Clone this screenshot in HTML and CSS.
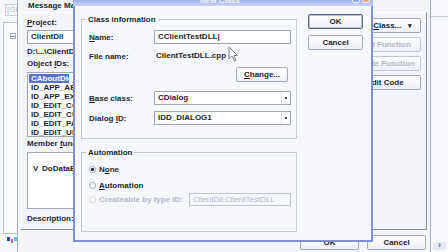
FILE: index.html
```html
<!DOCTYPE html>
<html lang="en">

<head>
  <meta charset="UTF-8">
  <title>New Class</title>
  <link rel="stylesheet" href="styles.css">
</head>

<body>
  <div class="desktop">

    <!-- IDE workspace pane on the left -->
    <div class="ide-left">
      <div class="ide-combo">[Gl</div>
      <div class="ide-tree"><span class="tree-box"></span></div>
      <div class="ide-icon"><i class="sq blue"></i><i class="sq pink"></i><i class="sq cyan"></i></div>
    </div>

    <!-- ClassWizard, behind the dialog -->
    <div class="wizard">
      <div class="tabs"><span class="tab">Message Maps</span></div>
      <div class="page">
        <div class="page-left">
          <div class="lbl first"><u>P</u>roject:</div>
          <div class="box combo-sm">ClientDll</div>
          <div class="lbl path">D:\...\ClientDll.dsw</div>
          <div class="lbl">Object <u>I</u>Ds:</div>
          <div class="box list ids">
            <div class="item sel">CAboutDlg</div>
            <div class="item">ID_APP_ABOUT</div>
            <div class="item">ID_APP_EXIT</div>
            <div class="item">ID_EDIT_COPY</div>
            <div class="item">ID_EDIT_CUT</div>
            <div class="item">ID_EDIT_PASTE</div>
            <div class="item">ID_EDIT_UNDO</div>
          </div>
          <div class="lbl">Member <u>f</u>unctions:</div>
          <div class="box list members">
            <div class="item"><span class="kind">V</span>DoDataExchange</div>
          </div>
          <div class="lbl desc">Description:</div>
        </div>
        <div class="page-right">
          <div class="btn">Add <u>C</u>lass... <span class="caret">▾</span></div>
          <div class="btn off">Add Function</div>
          <div class="btn off">Delete Function</div>
          <div class="btn"><u>E</u>dit Code</div>
        </div>
      </div>
      <div class="wizard-buttons">
        <div class="btn wide">OK</div>
        <div class="btn wide">Cancel</div>
      </div>
    </div>

    <!-- IDE pane on the right -->
    <div class="ide-right">
      <div class="ide-right-head"></div>
      <div class="ide-right-body"></div>
      <div class="more">&rsaquo;</div>
    </div>

    <!-- New Class dialog -->
    <div class="dlg">
      <div class="titlebar">
        <span class="title">New Class</span>
        <span class="tb-btn help"></span>
        <span class="tb-btn close"></span>
      </div>
      <div class="dlg-body">
        <div class="dlg-main">
          <div class="group info">
            <div class="group-title">Class information</div>
            <div class="row name">
              <span class="row-lbl"><u>N</u>ame:</span>
              <div class="box field">CClientTestDLL|</div>
            </div>
            <div class="row file">
              <span class="row-lbl">File name:</span>
              <div class="static">ClientTestDLL.cpp</div>
            </div>
            <div class="row change">
              <div class="btn chg"><u>C</u>hange...</div>
            </div>
            <div class="row base">
              <span class="row-lbl"><u>B</u>ase class:</span>
              <div class="box field combo">CDialog<span class="drop"></span></div>
            </div>
            <div class="row dlgid">
              <span class="row-lbl">Dialog <u>I</u>D:</span>
              <div class="box field combo">IDD_DIALOG1<span class="drop"></span></div>
            </div>
          </div>

          <div class="group auto">
            <div class="group-title">Automation</div>
            <div class="radio r1"><span class="dot on"></span><span>N<u>o</u>ne</span></div>
            <div class="radio r2"><span class="dot"></span><span><u>A</u>utomation</span></div>
            <div class="radio r3 off"><span class="dot"></span><span>Createable by type ID:</span>
              <div class="box field ro">ClientDll.ClientTestDLL</div>
            </div>
          </div>
        </div>
        <div class="dlg-side">
          <div class="btn dlg-btn default">OK</div>
          <div class="btn dlg-btn">Cancel</div>
        </div>
      </div>
    </div>

    <svg class="cursor" width="11" height="16" viewBox="0 0 11 16">
      <path d="M1 1 L1 13 L4 10 L6.5 15 L8 14.3 L5.6 9.5 L9.5 9.5 Z" fill="#fff" stroke="#77798a" stroke-width="1" />
    </svg>
  </div>
</body>

</html>
```

FILE: styles.css
```css
* {
  box-sizing: border-box;
}

/* whole screen */
body {
  margin: 0;
  width: 448px;
  height: 252px;
  overflow: hidden;
  font-family: "Liberation Sans", Arial, sans-serif;
  font-size: 8px;
  font-weight: bold;
  color: #1d1f2c;
  background-color: #f4f5fa;
}

u {
  text-decoration-thickness: 1px;
  text-underline-offset: 1px;
}

.desktop {
  position: relative;
  display: flex;
  width: 448px;
  height: 252px;
  overflow: hidden;
}

/* IDE left pane */
.ide-left {
  width: 17px;
  flex: none;
  display: flex;
  flex-direction: column;
  background-color: #f6f7fb;
}

.ide-combo {
  margin: 4px 0 0 5px;
  height: 12px;
  padding-left: 1px;
  border: 1px solid #ccd0dd;
  border-right: none;
  color: #b3b8ca;
  font-weight: normal;
  line-height: 10px;
  overflow: hidden;
}

.ide-tree {
  margin: 6px 0 0 3px;
  height: 212px;
  border: 1px solid #b8bdd0;
  border-right: none;
  background-color: #fbfcfe;
  padding: 10px 0 0 6px;
}

.tree-box {
  display: block;
  width: 6px;
  height: 6px;
  border: 1px solid #a9aec0;
  background: linear-gradient(#7d8294, #7d8294) center / 4px 1px no-repeat;
}

.ide-icon {
  margin: 3px 0 0 7px;
  display: flex;
  gap: 1px;
}

.sq {
  width: 3px;
  height: 4px;
}

.sq.blue { background-color: #2f3fd0; }
.sq.pink { background-color: #c05ad0; margin-top: 2px; }
.sq.cyan { background-color: #52c0e0; }

/* ClassWizard window */
.wizard {
  width: 414px;
  flex: none;
  display: flex;
  flex-direction: column;
  border-left: 1px solid #a6aed0;
  border-right: 1px solid #a6aed0;
  background-color: #f4f5fa;
}

.tabs {
  height: 12px;
  padding-left: 3px;
  display: flex;
}

.tab {
  padding: 0 6px;
  line-height: 12px;
  border: 1px solid #ffffff;
  border-bottom: none;
  border-top: none;
}

.page {
  margin: 0 3px 0 2px;
  height: 218px;
  border: 1px solid;
  border-color: #ffffff #8d8f9a #8d8f9a #ffffff;
  display: flex;
  justify-content: space-between;
}

.page-left {
  width: 180px;
  padding-left: 6px;
  display: flex;
  flex-direction: column;
}

.lbl {
  line-height: 10px;
  margin-top: 2px;
  white-space: nowrap;
}

.lbl.first { margin-top: 5px; }
.lbl.path { margin-top: 3px; }
.lbl.desc { margin-top: 5px; }

.box {
  background-color: #ffffff;
  border: 1px solid #a2a7b7;
  white-space: nowrap;
  overflow: hidden;
}

.combo-sm {
  margin-top: 2px;
  height: 14px;
  width: 120px;
  padding-left: 3px;
  line-height: 12px;
}

.list {
  margin-top: 3px;
  width: 120px;
  padding: 1px 0 0 1px;
}

.list.ids { height: 65px; }
.list.members { height: 57px; padding-top: 11px; }

.item {
  height: 9px;
  line-height: 9px;
  padding-left: 2px;
}

.item.sel {
  background-color: #5870d2;
  color: #ffffff;
  width: 40px;
}

.kind {
  display: inline-block;
  width: 11px;
  padding-left: 2px;
}

.page-right {
  padding: 5px 5px 0 0;
  display: flex;
  flex-direction: column;
  gap: 4px;
}

/* push buttons */
.btn {
  height: 15px;
  border: 1px solid #a4a8b8;
  border-radius: 2px;
  background: linear-gradient(#ffffff, #eef0f6);
  display: flex;
  align-items: center;
  justify-content: center;
  white-space: nowrap;
}

.page-right .btn {
  width: 72px;
}

.btn.off {
  color: #b1b6cb;
  border-color: #c3c7d6;
}

.caret {
  margin-left: 7px;
  font-size: 7px;
}

.wizard-buttons {
  margin-top: 5px;
  padding-right: 4px;
  display: flex;
  justify-content: flex-end;
  gap: 8px;
}

.btn.wide {
  width: 59px;
}

/* IDE right pane */
.ide-right {
  width: 17px;
  flex: none;
  display: flex;
  flex-direction: column;
  background-color: #f8f9fd;
}

.ide-right-head {
  height: 17px;
  border-bottom: 1px solid #c6cad8;
}

.ide-right-body {
  flex: 1;
}

.more {
  margin: 0 2px 2px 2px;
  height: 8px;
  line-height: 7px;
  font-size: 9px;
  color: #4b66c8;
  background-color: #e6e9f4;
  text-align: center;
}

/* New Class dialog */
.dlg {
  position: absolute;
  left: 73px;
  top: -12px;
  width: 300px;
  height: 254px;
  border: 2px solid #8390d0;
  border-top: none;
  background-color: #f7f8fc;
  display: flex;
  flex-direction: column;
}

.titlebar {
  height: 18px;
  flex: none;
  margin: 0 -2px;
  padding: 0 3px 0 127px;
  background: linear-gradient(#8295e2, #a3b2ec 70%, #ccd4f4);
  display: flex;
  align-items: flex-start;
}

.title {
  flex: 1;
  margin-top: 7px;
  line-height: 12px;
  color: #f2f4ff;
}

.tb-btn {
  width: 8px;
  height: 8px;
  margin-top: 7px;
  margin-left: 2px;
  border-radius: 2px;
  border: 1px solid #eef0fa;
}

.tb-btn.help { background-color: #9badea; }
.tb-btn.close { background-color: #e6a69c; }

.dlg-body {
  flex: 1;
  display: flex;
  padding-left: 6px;
}

.dlg-main {
  width: 216px;
  padding-top: 13px;
}

.group {
  border: 1px solid #c5c8d4;
  padding: 0 5px 0 7px;
}

.group.info { height: 120px; }
.group.auto { height: 80px; margin-top: 13px; }

.group-title {
  display: inline-block;
  margin: -6px 0 0 -3px;
  padding: 0 2px;
  line-height: 11px;
  background-color: #f7f8fc;
  vertical-align: top;
}

.row {
  display: flex;
  align-items: center;
  height: 14px;
}

.row.name { margin-top: 1px; }
.row.file { margin-top: 5px; }
.row.change { margin-top: 4px; height: 15px; justify-content: flex-end; padding-right: 3px; }
.row.base { margin-top: 9px; }
.row.dlgid { margin-top: 6px; }

.row-lbl {
  width: 65px;
  flex: none;
}

.field {
  flex: 1;
  height: 14px;
  line-height: 12px;
  padding-left: 3px;
  display: flex;
  align-items: center;
}

.static {
  flex: 1;
  height: 14px;
  line-height: 14px;
  padding-left: 1px;
  border-left: 1px solid #e0e2ea;
}

.btn.chg {
  width: 52px;
}

.combo {
  justify-content: space-between;
  padding-right: 1px;
}

.drop {
  width: 8px;
  height: 10px;
  border-left: 1px solid #e2e4ec;
  background: linear-gradient(#3c3f4c, #3c3f4c) center / 2px 2px no-repeat;
}

.radio {
  display: flex;
  align-items: center;
  height: 10px;
  white-space: nowrap;
}

.radio.r1 { margin-top: 2px; }
.radio.r2 { margin-top: 6px; }
.radio.r3 { margin-top: 3px; height: 13px; }

.radio.off {
  color: #b3b8cc;
}

.dot {
  width: 7px;
  height: 7px;
  flex: none;
  margin-right: 3px;
  border: 1px solid #9aa0b6;
  border-radius: 50%;
  background-color: #ffffff;
}

.radio.off .dot {
  border-color: #ccd0dc;
}

.dot.on {
  background: radial-gradient(circle, #2a2d3a 0 1.3px, #ffffff 1.8px);
}

.field.ro {
  flex: none;
  width: 102px;
  height: 13px;
  margin-left: auto;
  border-color: #c0c4d2;
  background-color: #f7f8fc;
  font-weight: normal;
  color: #aeb4cf;
}

.dlg-side {
  margin-left: 11px;
  padding-top: 8px;
  display: flex;
  flex-direction: column;
  gap: 6px;
}

.btn.dlg-btn {
  width: 55px;
}

.btn.default {
  border-color: #5c6074;
  box-shadow: inset 0 0 0 1px #b8c2e8;
}

/* mouse pointer over the dialog */
.cursor {
  position: absolute;
  left: 228px;
  top: 46px;
}
```
